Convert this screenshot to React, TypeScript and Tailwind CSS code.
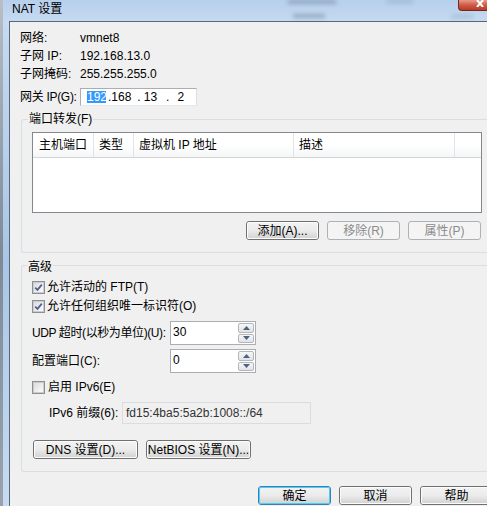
import React from "react";

const Checkbox: React.FC<{ checked?: boolean }> = ({ checked }) => (
  <span className="flex h-[13px] w-[13px] shrink-0 items-center justify-center border border-[#8e8f8f] bg-white">
    <span className="flex h-[11px] w-[11px] items-center justify-center border border-[#c9cbcf] bg-gradient-to-br from-[#dcdcdc] to-[#fbfbfb]">
      {checked && (
        <svg width="9" height="9" viewBox="0 0 9 9">
          <path d="M1.2 4.6 L3.5 6.9 L7.8 1.6" fill="none" stroke="#4e5f93" strokeWidth="1.7" />
        </svg>
      )}
    </span>
  </span>
);

const Button: React.FC<{ label: string; w: string; disabled?: boolean; primary?: boolean }> = ({
  label,
  w,
  disabled,
  primary,
}) => {
  if (disabled) {
    return (
      <div
        className={`${w} flex h-[19px] items-center justify-center whitespace-nowrap rounded-[3px] border border-[#adb2b5] bg-[#f4f4f4] text-[#8b8b8b]`}
      >
        {label}
      </div>
    );
  }
  return (
    <div
      className={`${w} h-[19px] rounded-[3px] border ${
        primary ? "border-[#3c7fb1]" : "border-[#707070]"
      }`}
    >
      <div
        className={`flex h-full items-center justify-center whitespace-nowrap rounded-[2px] border ${
          primary ? "border-[#48d0fa]" : "border-[#fcfcfc]"
        } bg-gradient-to-b from-[#f2f2f2] via-[#ebebeb] to-[#d4d4d4]`}
      >
        {label}
      </div>
    </div>
  );
};

const Spinner: React.FC<{ value: string }> = ({ value }) => (
  <div className="flex h-[24px] w-[86px] shrink-0 border border-[#abadb3] bg-white">
    <div className="flex-1 pl-[2px] pt-[3px]">{value}</div>
    <div className="flex w-[17px] flex-col gap-[1px] py-[1px] pr-[1px]">
      <div className="flex h-[10px] items-center justify-center rounded-[2px] border border-[#b3b6ba] bg-gradient-to-b from-[#f7f7f7] to-[#e1e3e6]">
        <svg width="7" height="4" viewBox="0 0 7 4">
          <path d="M0 4 L3.5 0 L7 4 Z" fill="#4d6185" />
        </svg>
      </div>
      <div className="flex h-[10px] items-center justify-center rounded-[2px] border border-[#b3b6ba] bg-gradient-to-b from-[#f7f7f7] to-[#e1e3e6]">
        <svg width="7" height="4" viewBox="0 0 7 4">
          <path d="M0 0 L3.5 4 L7 0 Z" fill="#4d6185" />
        </svg>
      </div>
    </div>
  </div>
);

export default function App() {
  const infoRows = [
    { label: "网络:", value: "vmnet8" },
    { label: "子网 IP:", value: "192.168.13.0" },
    { label: "子网掩码:", value: "255.255.255.0" },
  ];

  const columns = [
    { name: "主机端口", w: "w-[61px] pl-[6px]" },
    { name: "类型", w: "w-[40px] pl-[5px]" },
    { name: "虚拟机 IP 地址", w: "w-[160px] pl-[5px]" },
    { name: "描述", w: "w-[161px] pl-[5px]" },
  ];

  return (
    <div className="flex h-[506px] w-[487px] overflow-hidden bg-[#c3d8f0] font-['Liberation_Sans','Noto_Sans_CJK_SC',sans-serif] text-[12px] leading-[14px] text-black">
      <div className="w-[3px] shrink-0 bg-gradient-to-b from-[#b8bec4] via-[#7d8a96] to-[#98a3ad]" />
      <div className="flex min-w-0 flex-1 flex-col">
        {/* title bar */}
        <div className="relative flex h-[21px] shrink-0 items-start justify-between bg-gradient-to-b from-[#b6cfec] to-[#c6daf1]">
          <div className="absolute left-[285px] top-[0px] h-[4px] w-[48px] bg-[#56657a]/40 blur-[2px]" />
          <div className="absolute left-[290px] top-[14px] h-[4px] w-[32px] bg-[#56657a]/40 blur-[2px]" />
          <div className="absolute left-[384px] top-[0px] h-[3px] w-[26px] bg-[#56657a]/25 blur-[2px]" />
          <div className="absolute left-[448px] top-[15px] h-[3px] w-[22px] bg-[#56657a]/25 blur-[2px]" />
          <span className="relative pl-[9px] pt-[2px]">NAT 设置</span>
          <div className="relative flex h-[11px] w-[29px] items-start justify-end rounded-bl-[4px] border-b border-l border-[#6e2a1f] bg-gradient-to-b from-[#e69a8b] via-[#cf5a45] to-[#b83a24] pr-[2px]">
            <svg width="9" height="7" viewBox="0 0 9 7">
              <path d="M1 0 L7 7 M7 0 L1 7" stroke="#ffffff" strokeWidth="2" />
            </svg>
          </div>
        </div>

        <div className="flex min-h-0 flex-1">
          <div className="w-[6px] shrink-0 bg-gradient-to-b from-[#c6daf1] via-[#a9c6e6] to-[#c8dbf1]" />
          {/* dialog body */}
          <div className="flex min-w-0 flex-1 flex-col overflow-hidden whitespace-nowrap border-l border-t border-[#56677a] bg-[#f0f0f0] pl-[10px] pt-[7px]">
            {infoRows.map((r) => (
              <div key={r.label} className="flex h-[18px] items-center">
                <span className="w-[60px]">{r.label}</span>
                <span>{r.value}</span>
              </div>
            ))}

            <div className="mt-[5px] flex h-[18px] items-center">
              <span className="w-[60px] shrink-0 tracking-[-0.3px]">网关 IP(G):</span>
              <div className="flex h-[18px] w-[117px] items-center border border-[#abadb3] border-b-[#e3e9ef] border-r-[#dbdfe6] bg-white pl-[6px]">
                <span className="w-[19px] bg-[#3399ff] text-center leading-[12px] text-white">192</span>
                <span className="ml-[2px]">.168</span>
                <span className="ml-[6px]">.</span>
                <span className="ml-[3px]">13</span>
                <span className="ml-[9px]">.</span>
                <span className="ml-[8px]">2</span>
              </div>
            </div>

            {/* 端口转发 */}
            <div className="relative ml-[1px] mt-[13px] h-[134px] shrink-0 rounded-l-[3px] border-b border-l border-t border-[#d5dfe5] pl-[10px] pt-[12px]">
              <span className="absolute left-[6px] top-[-8px] bg-[#f0f0f0] px-[1px]">端口转发(F)</span>
              <div className="flex h-[81px] w-[450px] flex-col border border-[#828790] bg-white">
                <div className="flex h-[25px] border-b border-[#d5d5d5] bg-gradient-to-b from-white via-white to-[#f5f6f8]">
                  {columns.map((c) => (
                    <div key={c.name} className={`${c.w} flex items-center border-r border-[#e2e3e4]`}>
                      {c.name}
                    </div>
                  ))}
                  <div className="flex-1" />
                </div>
              </div>
              <div className="mt-[8px] flex w-[450px] justify-end gap-[8px] pr-[1px]">
                <Button label="添加(A)..." w="w-[73px]" />
                <Button label="移除(R)" w="w-[73px]" disabled />
                <Button label="属性(P)" w="w-[73px]" disabled />
              </div>
            </div>

            {/* 高级 */}
            <div className="relative ml-[1px] mt-[12px] h-[207px] shrink-0 rounded-l-[3px] border-b border-l border-t border-[#d5dfe5] pl-[10px] pt-[13px]">
              <span className="absolute left-[5px] top-[-6px] bg-[#f0f0f0] px-[1px]">高级</span>
              <div className="flex h-[16px] items-center gap-[2px]">
                <Checkbox checked />
                <span>允许活动的 FTP(T)</span>
              </div>
              <div className="mt-[3px] flex h-[16px] items-center gap-[2px]">
                <Checkbox checked />
                <span>允许任何组织唯一标识符(O)</span>
              </div>
              <div className="mt-[7px] flex h-[24px] items-center">
                <span className="w-[138px] shrink-0 tracking-[-0.4px]">UDP 超时(以秒为单位)(U):</span>
                <Spinner value="30" />
              </div>
              <div className="mt-[4px] flex h-[24px] items-center">
                <span className="w-[138px] shrink-0">配置端口(C):</span>
                <Spinner value="0" />
              </div>
              <div className="mt-[6px] flex h-[16px] items-center gap-[3px]">
                <Checkbox />
                <span>启用 IPv6(E)</span>
              </div>
              <div className="mt-[7px] flex h-[22px] items-center pl-[17px]">
                <span className="w-[73px] shrink-0">IPv6 前缀(6):</span>
                <div className="flex h-[22px] w-[189px] items-center border border-[#dadcdf] bg-[#f0f0f0] pl-[3px] text-[#333333]">
                  fd15:4ba5:5a2b:1008::/64
                </div>
              </div>
              <div className="mt-[16px] flex gap-[8px] pl-[1px]">
                <Button label="DNS 设置(D)..." w="w-[105px]" />
                <Button label="NetBIOS 设置(N)..." w="w-[105px]" />
              </div>
            </div>

            <div className="ml-[238px] mt-[14px] flex gap-[8px]">
              <Button label="确定" w="w-[73px] shrink-0" primary />
              <Button label="取消" w="w-[73px] shrink-0" />
              <Button label="帮助" w="w-[73px] shrink-0" />
            </div>
          </div>
        </div>
      </div>
    </div>
  );
}
